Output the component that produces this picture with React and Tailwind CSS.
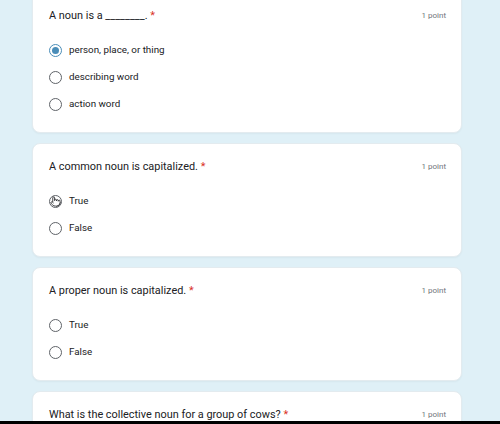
import { Pointer } from "lucide-react";

const questions = [
  { title: "A noun is a ________.", options: ["person, place, or thing", "describing word", "action word"], selected: 0 },
  { title: "A common noun is capitalized.", options: ["True", "False"], cursor: 0 },
  { title: "A proper noun is capitalized.", options: ["True", "False"] },
  { title: "What is the collective noun for a group of cows?", options: [] },
];

function Radio({ checked }) {
  return (
    <span className={`w-[13px] h-[13px] rounded-full border-[1.5px] flex items-center justify-center shrink-0 ${checked ? "border-[#4a8db8]" : "border-[#5f6368]"}`}>
      {checked && <span className="w-[7px] h-[7px] rounded-full bg-[#4a8db8]" />}
    </span>
  );
}

function Question({ q }) {
  return (
    <div className="bg-white rounded-lg border border-[#e3ebef] shadow-[0_1px_2px_rgba(0,0,0,0.04)] pl-4 pr-[15px] pt-[15px] pb-[14px]">
      <div className="flex items-center justify-between h-4">
        <div className="text-[10.9px] text-[#202124]">
          {q.title} <span className="text-[#d93025]">*</span>
        </div>
        <div className="text-[8px] text-[#70757a]">1 point</div>
      </div>
      <div className="mt-[13px] flex flex-col">
        {q.options.map((opt, i) => (
          <div key={opt} className="h-[27px] flex items-center gap-[7px] relative">
            <Radio checked={q.selected === i} />
            <span className="text-[9.8px] text-[#202124]">{opt}</span>
            {q.cursor === i && (
              <Pointer className="absolute left-[1px] top-[8px] w-[11px] h-[11px] text-[#202124] fill-white" strokeWidth={1.8} />
            )}
          </div>
        ))}
      </div>
    </div>
  );
}

export default function App() {
  return (
    <div className="w-[500px] h-[424px] overflow-hidden relative bg-[#dff0f7]" style={{ fontFamily: "Roboto, Arial, sans-serif" }}>
      <div className="w-[430px] ml-[32px] -mt-[8px] flex flex-col gap-[10px]">
        {questions.map((q) => (
          <Question key={q.title} q={q} />
        ))}
      </div>
      <div className="absolute left-0 right-0 bottom-0 h-[3px] bg-black" />
    </div>
  );
}
